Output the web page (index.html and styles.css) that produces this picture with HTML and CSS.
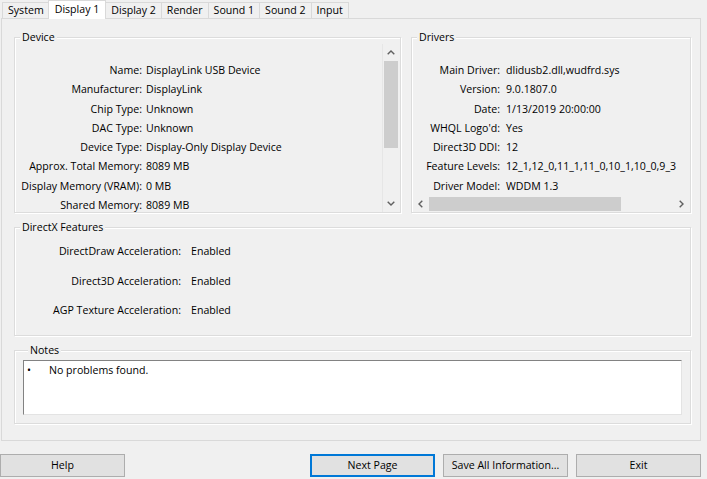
FILE: index.html
```html
<!DOCTYPE html>
<html lang="en">
<head>
    <meta charset="UTF-8">
    <title>DirectX Diagnostic Tool</title>
    <link rel="stylesheet" href="styles.css">
</head>
<body>
    <div class="dialog">
        <!-- tab strip -->
        <div class="tabs">
            <div class="tab">System</div>
            <div class="tab active">Display 1</div>
            <div class="tab">Display 2</div>
            <div class="tab">Render</div>
            <div class="tab">Sound 1</div>
            <div class="tab">Sound 2</div>
            <div class="tab">Input</div>
        </div>

        <div class="page">
            <div class="top-row">
                <!-- Device -->
                <fieldset class="group">
                    <legend>Device</legend>
                    <div class="scroll-v">
                        <div class="rows device-rows">
                            <div class="row"><span class="label">Name:</span><span>DisplayLink USB Device</span></div>
                            <div class="row"><span class="label">Manufacturer:</span><span>DisplayLink</span></div>
                            <div class="row"><span class="label">Chip Type:</span><span>Unknown</span></div>
                            <div class="row"><span class="label">DAC Type:</span><span>Unknown</span></div>
                            <div class="row"><span class="label">Device Type:</span><span>Display-Only Display Device</span></div>
                            <div class="row"><span class="label">Approx. Total Memory:</span><span>8089 MB</span></div>
                            <div class="row"><span class="label">Display Memory (VRAM):</span><span>0 MB</span></div>
                            <div class="row"><span class="label">Shared Memory:</span><span>8089 MB</span></div>
                        </div>
                        <div class="vbar">
                            <div class="sb-btn">
                                <svg width="8" height="5" viewBox="0 0 8 5"><path d="M0.7 4.3 L4 1 L7.3 4.3" fill="none" stroke="#606060" stroke-width="1.4"/></svg>
                            </div>
                            <div class="thumb"></div>
                            <div class="track"></div>
                            <div class="sb-btn">
                                <svg width="8" height="5" viewBox="0 0 8 5"><path d="M0.7 0.7 L4 4 L7.3 0.7" fill="none" stroke="#606060" stroke-width="1.4"/></svg>
                            </div>
                        </div>
                    </div>
                </fieldset>

                <!-- Drivers -->
                <fieldset class="group">
                    <legend>Drivers</legend>
                    <div class="scroll-h">
                        <div class="rows driver-rows">
                            <div class="row"><span class="label">Main Driver:</span><span>dlidusb2.dll,wudfrd.sys</span></div>
                            <div class="row"><span class="label">Version:</span><span>9.0.1807.0</span></div>
                            <div class="row"><span class="label">Date:</span><span>1/13/2019 20:00:00</span></div>
                            <div class="row"><span class="label">WHQL Logo'd:</span><span>Yes</span></div>
                            <div class="row"><span class="label">Direct3D DDI:</span><span>12</span></div>
                            <div class="row"><span class="label">Feature Levels:</span><span>12_1,12_0,11_1,11_0,10_1,10_0,9_3</span></div>
                            <div class="row"><span class="label">Driver Model:</span><span>WDDM 1.3</span></div>
                        </div>
                        <div class="hbar">
                            <div class="sb-btn">
                                <svg width="5" height="8" viewBox="0 0 5 8"><path d="M4.3 0.7 L1 4 L4.3 7.3" fill="none" stroke="#606060" stroke-width="1.4"/></svg>
                            </div>
                            <div class="thumb"></div>
                            <div class="track"></div>
                            <div class="sb-btn">
                                <svg width="5" height="8" viewBox="0 0 5 8"><path d="M0.7 0.7 L4 4 L0.7 7.3" fill="none" stroke="#606060" stroke-width="1.4"/></svg>
                            </div>
                        </div>
                    </div>
                </fieldset>
            </div>

            <!-- DirectX Features -->
            <fieldset class="group features">
                <legend>DirectX Features</legend>
                <div class="rows feature-rows">
                    <div class="row"><span class="label">DirectDraw Acceleration:</span><span>Enabled</span></div>
                    <div class="row"><span class="label">Direct3D Acceleration:</span><span>Enabled</span></div>
                    <div class="row"><span class="label">AGP Texture Acceleration:</span><span>Enabled</span></div>
                </div>
            </fieldset>

            <!-- Notes -->
            <fieldset class="group notes">
                <legend>Notes</legend>
                <div class="notes-box">
                    <div class="note"><span class="bullet">•</span>No problems found.</div>
                </div>
            </fieldset>
        </div>

        <!-- bottom buttons -->
        <div class="buttons">
            <div class="btn">Help</div>
            <div class="btn default">Next Page</div>
            <div class="btn">Save All Information...</div>
            <div class="btn">Exit</div>
        </div>
    </div>
</body>
</html>
```

FILE: styles.css
```css
* {
    box-sizing: border-box;
}

body {
    margin: 0;
    background: #f0f0f0;
    font-family: "Open Sans", "Liberation Sans", sans-serif;
    font-size: 10.6px;
    color: #000;
}

.dialog {
    width: 701px;
}

/* tab strip */
.tabs {
    display: flex;
    align-items: flex-end;
    height: 18px;
    padding-left: 2px;
}

.tab {
    height: 16px;
    line-height: 15px;
    padding: 0 5px;
    border: 1px solid #d9d9d9;
    border-bottom: 0;
    margin-right: -1px;
    background: #f0f0f0;
}

.tab.active {
    position: relative;
    z-index: 1;
    height: 19px;
    line-height: 17px;
    margin: 0 -1px -1px -1px;
    padding: 0 6px;
    background: #fff;
}

.page {
    margin-left: 1px;
    width: 700px;
    height: 423px;
    border: 1px solid #d9d9d9;
    padding: 11px 9px 0 12px;
}

/* group boxes */
.group {
    margin: 0;
    padding: 0;
    min-width: 0;
    border: 1px solid #dcdcdc;
    box-shadow: inset 1px 1px 0 #fff, 1px 1px 0 #fff;
}

.group legend {
    margin-left: 5px;
    padding: 0 2px;
    height: 14px;
    line-height: 14px;
    background: #f0f0f0;
}

.top-row {
    display: grid;
    grid-template-columns: 387px 1fr;
    column-gap: 10px;
}

.rows {
    overflow: hidden;
    white-space: nowrap;
}

.row {
    display: grid;
    height: 19.3px;
    line-height: 19.3px;
}

.label {
    text-align: right;
}

/* device list with vertical scrollbar */
.scroll-v {
    display: flex;
    height: 168px;
}

.device-rows {
    flex: 1;
    padding-top: 17px;
}

.device-rows .row {
    grid-template-columns: 127px 1fr;
    column-gap: 4px;
}

.vbar {
    width: 17px;
    margin-right: 1px;
    display: flex;
    flex-direction: column;
    border-left: 1px solid #e6e6e6;
}

.vbar .sb-btn {
    height: 17px;
    display: flex;
    align-items: center;
    justify-content: center;
}

.vbar .thumb {
    height: 87px;
    margin: 0 1px;
    background: #cdcdcd;
}

.vbar .track {
    flex: 1;
}

/* drivers list with horizontal scrollbar */
.scroll-h {
    display: flex;
    flex-direction: column;
    height: 168px;
}

.driver-rows {
    flex: 1;
    padding-top: 17px;
}

.driver-rows .row {
    grid-template-columns: 88px 1fr;
    column-gap: 6px;
}

.hbar {
    height: 16px;
    display: flex;
}

.hbar .sb-btn {
    width: 17px;
    display: flex;
    align-items: center;
    justify-content: center;
}

.hbar .thumb {
    width: 192px;
    margin: 1px 0;
    background: #cdcdcd;
}

.hbar .track {
    flex: 1;
}

/* DirectX features */
.features {
    margin-top: 7px;
    height: 116px;
}

.feature-rows {
    padding-top: 3px;
}

.feature-rows .row {
    height: 29.5px;
    line-height: 29.5px;
    grid-template-columns: 166px 1fr;
    column-gap: 10px;
}

/* notes */
.notes {
    margin-top: 7px;
    height: 81px;
    padding: 3px 8px 0 8px;
}

.notes-box {
    height: 55px;
    background: #fff;
    border: 1px solid;
    border-color: #828282 #e3e3e3 #e3e3e3 #828282;
    padding: 2px 3px 0;
}

.note {
    line-height: 15px;
}

.bullet {
    display: inline-block;
    width: 22px;
}

/* buttons */
.buttons {
    display: flex;
    gap: 8px;
    margin-top: 13px;
}

.btn {
    width: 125px;
    height: 23px;
    line-height: 20px;
    text-align: center;
    background: #e1e1e1;
    border: 1px solid #adadad;
}

.btn.default {
    margin-left: auto;
    border: 2px solid #0078d7;
    line-height: 18px;
}
```
